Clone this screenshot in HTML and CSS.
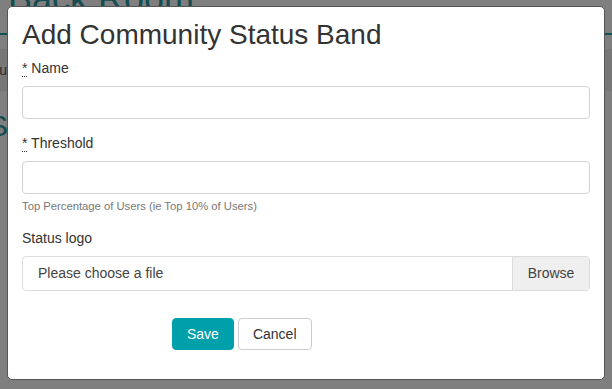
FILE: index.html
```html
<!DOCTYPE html>
<html>
<head>
<meta charset="utf-8">
<link rel="stylesheet" href="styles.css">
</head>
<body>
<div class="page">
  <div class="brand">Back Room</div>
  <div class="brand-line"></div>
  <div class="crumbs"><span class="crumb-text">Menu</span></div>
  <h2 class="page-title">Status Bands</h2>
</div>
<div class="overlay"></div>
<div class="modal">
  <h4 class="modal-title">Add Community Status Band</h4>
  <div class="form-group">
    <label class="label"><abbr class="req" title="required">*</abbr> Name</label>
    <div class="input"></div>
  </div>
  <div class="form-group">
    <label class="label"><abbr class="req" title="required">*</abbr> Threshold</label>
    <div class="input"></div>
    <div class="help">Top Percentage of Users (ie Top 10% of Users)</div>
  </div>
  <div class="form-group">
    <label class="label">Status logo</label>
    <div class="file">
      <span class="file-text">Please choose a file</span>
      <span class="file-btn">Browse</span>
    </div>
  </div>
  <div class="actions">
    <button class="btn btn-save">Save</button>
    <button class="btn btn-cancel">Cancel</button>
  </div>
</div>
</body>
</html>
```
FILE: styles.css
```css
html, body {
  margin: 0;
  padding: 0;
  background: #fff;
  font-family: "Liberation Sans", Arial, sans-serif;
  color: #333;
  overflow: hidden;
  height: 389px;
}
.page {
  width: 612px;
}
.brand {
  font-size: 36px;
  line-height: 36px;
  color: #2a9ba3;
  margin-top: -19px;
  padding-left: 8px;
}
.brand-line {
  height: 2px;
  background: #1aa8a8;
  margin-top: 16px;
}
.crumbs {
  margin-top: 14px;
  height: 42px;
  background: #eeeeee;
  font-size: 14px;
  line-height: 42px;
  overflow: hidden;
}
.crumb-text {
  margin-left: -28px;
  color: #555;
}
.page-title {
  margin: 18px 0 0 -12px;
  font-size: 30px;
  font-weight: normal;
  color: #2a9ba3;
}
.overlay {
  position: fixed;
  inset: 0;
  background: rgba(0, 0, 0, 0.5);
}
.modal {
  position: absolute;
  left: 7px;
  top: 6px;
  width: 568px;
  height: 344px;
  padding: 8px 14px 20px 14px;
  background: #fff;
  border: 1px solid #555;
  border-radius: 5px;
  box-sizing: content-box;
}
.modal-title {
  margin: 0 0 3px 0;
  font-size: 28px;
  font-weight: normal;
  line-height: 40px;
  color: #333;
}
.form-group {
  margin-bottom: 14px;
}
.label {
  display: block;
  font-size: 14px;
  line-height: 20px;
  margin-bottom: 8px;
}
.req {
  text-decoration: none;
  border-bottom: 1px dotted #333;
}
.input {
  height: 31px;
  border: 1px solid #d4d4d4;
  border-radius: 4px;
}
.help {
  font-size: 11.25px;
  line-height: 16px;
  color: #777;
  margin-top: 4px;
}
.file {
  display: flex;
  height: 33px;
  border: 1px solid #dcdcdc;
  border-radius: 4px;
  font-size: 14px;
  line-height: 33px;
  overflow: hidden;
}
.file-text {
  flex: 1;
  padding-left: 15px;
  color: #444;
}
.file-btn {
  width: 76px;
  text-align: center;
  background: #efefef;
  border-left: 1px solid #dcdcdc;
  color: #444;
}
.actions {
  margin-top: 27px;
  padding-left: 150px;
  display: flex;
  gap: 4px;
}
.btn {
  font-family: "Liberation Sans", Arial, sans-serif;
  font-size: 14px;
  height: 32px;
  padding: 0 14px;
  border-radius: 4px;
  border: 1px solid #ccc;
  background: #fff;
  color: #333;
}
.btn-save {
  background: #00a0ab;
  border-color: #00a0ab;
  color: #fff;
}
```
